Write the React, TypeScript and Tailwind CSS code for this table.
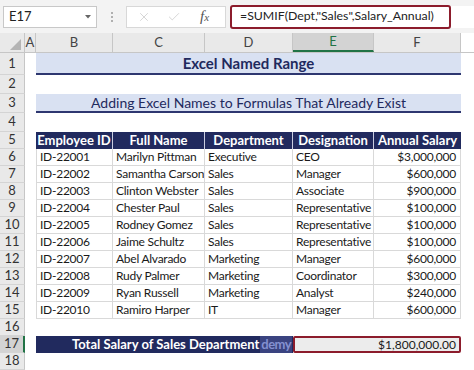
import { X, Check } from "lucide-react";

const cols = [
  { key: "B", w: "w-[77px]" },
  { key: "C", w: "w-[92px]" },
  { key: "D", w: "w-[88px]" },
  { key: "E", w: "w-[81px]" },
  { key: "F", w: "w-[87px]" },
];

const rows = [
  ["ID-22001", "Marilyn Pittman", "Executive", "CEO", "$3,000,000"],
  ["ID-22002", "Samantha Carson", "Sales", "Manager", "$600,000"],
  ["ID-22003", "Clinton Webster", "Sales", "Associate", "$900,000"],
  ["ID-22004", "Chester Paul", "Sales", "Representative", "$100,000"],
  ["ID-22005", "Rodney Gomez", "Sales", "Representative", "$100,000"],
  ["ID-22006", "Jaime Schultz", "Sales", "Representative", "$100,000"],
  ["ID-22007", "Abel Alvarado", "Marketing", "Manager", "$600,000"],
  ["ID-22008", "Rudy Palmer", "Marketing", "Coordinator", "$300,000"],
  ["ID-22009", "Ryan Russell", "Marketing", "Analyst", "$240,000"],
  ["ID-22010", "Ramiro Harper", "IT", "Manager", "$600,000"],
];

const headers = ["Employee ID", "Full Name", "Department", "Designation", "Annual Salary"];

function RowHead({ n, h, active }: { n: number; h: string; active?: boolean }) {
  return (
    <div
      className={`${h} w-[25px] shrink-0 flex items-center justify-center border-b border-[#d4d4d4] text-[13px] text-[#333] ${
        active ? "bg-[#d3d3d3] border-r-2 border-r-[#217346]" : "bg-[#e9e9e9] border-r border-r-[#c6c6c6]"
      }`}
    >
      {n}
    </div>
  );
}

function Toolbar() {
  return (
    <div className="h-[33px] bg-[#f3f3f3] flex items-center relative">
      <div className="ml-[3px] w-[94px] h-[22px] bg-white border border-[#c8c8c8] flex items-center justify-between pl-[5px] pr-[5px] text-[13px] text-[#222]">
        <span>E17</span>
        <svg width="6" height="4" viewBox="0 0 6 4">
          <polygon points="0,0 6,0 3,3.5" fill="#666" />
        </svg>
      </div>
      <div className="w-[29px] flex flex-col items-center gap-[2px]">
        <span className="w-[2px] h-[2px] bg-[#9a9a9a] rounded-full" />
        <span className="w-[2px] h-[2px] bg-[#9a9a9a] rounded-full" />
        <span className="w-[2px] h-[2px] bg-[#9a9a9a] rounded-full" />
      </div>
      <div className="w-[100px] h-[22px] bg-white border border-[#d8d8d8] flex items-center text-[#c4c4c4]">
        <X className="ml-[10px]" size={14} strokeWidth={1.2} />
        <Check className="ml-[16px]" size={14} strokeWidth={1.2} />
        <span className="ml-[19px] text-[15px] italic text-[#555] font-['Liberation_Serif',serif] leading-none">
          f<span className="text-[11px]">x</span>
        </span>
      </div>
      <div className="ml-[4px] w-[221px] h-[24px] border-2 border-[#8c1c2c] rounded-[3px] bg-white flex items-center pl-[8px] text-[12.3px] text-[#222] whitespace-nowrap">
        =SUMIF(Dept,"Sales",Salary_Annual)
      </div>
      <div className="flex-1 h-[22px] bg-white" />
    </div>
  );
}

function ColHeader() {
  return (
    <div className="h-[20px] flex bg-[#e9e9e9] border-b border-[#c6c6c6] text-[13px] text-[#444]">
      <div className="w-[25px] shrink-0 border-r border-[#c6c6c6] flex items-end justify-end pr-[3px] pb-[2px]">
        <svg width="11" height="11" viewBox="0 0 11 11">
          <polygon points="11,0 11,11 0,11" fill="#b4b4b4" />
        </svg>
      </div>
      <div className="w-[11px] shrink-0 border-r border-[#c6c6c6] flex items-center justify-center">A</div>
      {cols.map((c) => (
        <div
          key={c.key}
          className={`${c.w} shrink-0 border-r border-[#c6c6c6] flex items-center justify-center ${
            c.key === "E" ? "bg-[#d3d3d3] border-b-2 border-b-[#217346] text-[#217346]" : ""
          }`}
        >
          {c.key}
        </div>
      ))}
      <div className="flex-1 bg-white" />
    </div>
  );
}

function Spacer({ n, h }: { n: number; h: string }) {
  return (
    <div className={`${h} flex`}>
      <RowHead n={n} h={h} />
      <div className="flex-1" />
    </div>
  );
}

function TitleRow({ n, h, children, bold }: { n: number; h: string; children: string; bold?: boolean }) {
  return (
    <div className={`${h} flex`}>
      <RowHead n={n} h={h} />
      <div className="w-[11px] shrink-0" />
      <div
        className={`w-[425px] shrink-0 bg-[#d9e1f2] border-b-2 border-[#2e3770] flex items-center justify-center text-[#1f2a5e] whitespace-nowrap ${
          bold ? "font-bold text-[15px]" : "text-[14px]"
        }`}
      >
        {children}
      </div>
    </div>
  );
}

export default function App() {
  return (
    <div className="w-[474px] h-[370px] overflow-hidden bg-white font-['Lato','Liberation_Sans',sans-serif]">
      <Toolbar />
      <ColHeader />
      <TitleRow n={1} h="h-[22px]" bold>
        Excel Named Range
      </TitleRow>
      <Spacer n={2} h="h-[19px]" />
      <TitleRow n={3} h="h-[19px]">
        Adding Excel Names to Formulas That Already Exist
      </TitleRow>
      <Spacer n={4} h="h-[19px]" />

      <div className="h-[17px] flex">
        <RowHead n={5} h="h-[17px]" />
        <div className="w-[11px] shrink-0" />
        {cols.map((c, i) => (
          <div
            key={c.key}
            className={`${c.w} shrink-0 bg-[#212a5e] text-white font-bold text-[13px] flex items-center justify-center whitespace-nowrap ${
              i < 4 ? "border-r border-r-[#c9cde0]" : ""
            }`}
          >
            {headers[i]}
          </div>
        ))}
      </div>

      {rows.map((r, ri) => (
        <div key={ri} className="h-[17px] flex">
          <RowHead n={ri + 6} h="h-[17px]" />
          <div className="w-[11px] shrink-0" />
          {cols.map((c, i) => (
            <div
              key={c.key}
              className={`${c.w} shrink-0 border-r border-b border-[#d9d9d9] ${
                i === 0 ? "border-l" : ""
              } text-[12px] tracking-[-0.25px] text-[#1a1a1a] flex items-center whitespace-nowrap overflow-hidden leading-none ${
                i === 4 ? "justify-end pr-[4px]" : "pl-[3px]"
              }`}
            >
              {r[i]}
            </div>
          ))}
        </div>
      ))}

      <Spacer n={16} h="h-[17px]" />

      <div className="h-[17px] flex">
        <RowHead n={17} h="h-[17px]" active />
        <div className="w-[11px] shrink-0" />
        <div className="w-[257px] shrink-0 bg-[#212a5e] text-white font-bold text-[13px] flex items-center pl-[36px] whitespace-nowrap overflow-hidden">
          <span>Total Salary of Sales Department</span>
          <span className="ml-[1px] h-[17px] px-[1px] bg-[#3a4380] flex items-center text-[13px] font-bold leading-none text-[#8490d0] tracking-[-0.5px]">
            demy
          </span>
        </div>
        <div className="w-[168px] shrink-0 bg-[#ececec] border-2 border-[#8c1c2c] rounded-[2px] flex items-center justify-end pr-[3px] text-[12px] text-[#1a1a1a]">
          $1,800,000.00
        </div>
      </div>

      <Spacer n={18} h="h-[17px]" />
    </div>
  );
}
